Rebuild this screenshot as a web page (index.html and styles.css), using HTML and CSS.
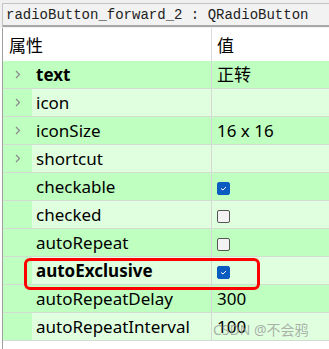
FILE: index.html
```html
<!DOCTYPE html>
<html lang="zh">
<head>
  <meta charset="UTF-8" />
  <title>Property Editor</title>
  <link rel="stylesheet" href="styles.css">
</head>
<body>
  <div class="title">
    <div class="title-box">radioButton_forward_2 : QRadioButton</div>
  </div>

  <div class="table">
    <div class="head">
      <div class="name-head">属性</div>
      <div class="value-head">值</div>
    </div>

    <div class="row dark">
      <div class="branch"><svg class="arrow" width="6" height="9" viewBox="0 0 6 9"><path d="M1 1 L4.5 4.5 L1 8" fill="none" stroke="#8a8a8a" stroke-width="1.2"/></svg></div>
      <div class="label bold">text</div>
      <div class="value">正转</div>
    </div>
    <div class="row light">
      <div class="branch"><svg class="arrow" width="6" height="9" viewBox="0 0 6 9"><path d="M1 1 L4.5 4.5 L1 8" fill="none" stroke="#8a8a8a" stroke-width="1.2"/></svg></div>
      <div class="label">icon</div>
      <div class="value"></div>
    </div>
    <div class="row dark">
      <div class="branch"><svg class="arrow" width="6" height="9" viewBox="0 0 6 9"><path d="M1 1 L4.5 4.5 L1 8" fill="none" stroke="#8a8a8a" stroke-width="1.2"/></svg></div>
      <div class="label">iconSize</div>
      <div class="value">16 x 16</div>
    </div>
    <div class="row light">
      <div class="branch"><svg class="arrow" width="6" height="9" viewBox="0 0 6 9"><path d="M1 1 L4.5 4.5 L1 8" fill="none" stroke="#8a8a8a" stroke-width="1.2"/></svg></div>
      <div class="label">shortcut</div>
      <div class="value"></div>
    </div>
    <div class="row dark">
      <div class="branch"></div>
      <div class="label">checkable</div>
      <div class="value"><span class="check on"><svg width="7" height="5" viewBox="0 0 7 5"><path d="M1 2.5 L3 4 L6 1" fill="none" stroke="#fff" stroke-width="1"/></svg></span></div>
    </div>
    <div class="row light">
      <div class="branch"></div>
      <div class="label">checked</div>
      <div class="value"><span class="check"></span></div>
    </div>
    <div class="row dark">
      <div class="branch"></div>
      <div class="label">autoRepeat</div>
      <div class="value"><span class="check"></span></div>
    </div>
    <div class="row light marked">
      <div class="branch"></div>
      <div class="label bold">autoExclusive</div>
      <div class="value"><span class="check on"><svg width="7" height="5" viewBox="0 0 7 5"><path d="M1 2.5 L3 4 L6 1" fill="none" stroke="#fff" stroke-width="1"/></svg></span></div>
      <div class="mark"></div>
    </div>
    <div class="row dark">
      <div class="branch"></div>
      <div class="label">autoRepeatDelay</div>
      <div class="value">300</div>
    </div>
    <div class="row light">
      <div class="branch"></div>
      <div class="label">autoRepeatInterval</div>
      <div class="value">100</div>
      <div class="watermark">CSDN @不会鸦</div>
    </div>
  </div>
</body>
</html>
```

FILE: styles.css
```css
body {
  margin: 0;
  background: #fff;
  font-family: "Noto Sans", "Noto Sans CJK SC", sans-serif;
  font-size: 17px;
  color: #000;
  width: 329px;
  height: 349px;
  overflow: hidden;
}
.title {
  height: 28px;
  background: #f0f0f0;
  padding: 3px 0 0 2px;
  box-sizing: border-box;
}
.title-box {
  height: 24px;
  box-sizing: border-box;
  border-top: 1px solid #c4c4c4;
  border-left: 1px solid #c4c4c4;
  border-bottom: 2px solid #a8a8a8;
  background: #f2f2f2;
  padding-left: 3px;
  font-family: "Liberation Mono", monospace;
  font-size: 14px;
  line-height: 22px;
  color: #222;
}
.table {
  margin-left: 2px;
  border-left: 1px solid #a0a0a0;
  height: 321px;
}
.head {
  display: flex;
  height: 33px;
}
.name-head {
  width: 209px;
  border-right: 1px solid #dcdcdc;
  padding-left: 6px;
  line-height: 36px;
  box-sizing: border-box;
}
.value-head {
  flex: 1;
  padding-left: 5px;
  line-height: 36px;
}
.row {
  position: relative;
  display: flex;
  height: 28px;
  box-sizing: border-box;
  border-bottom: 1px solid #d3dcd3;
  background: #bfffbf;
}
.row.marked {
  z-index: 1;
}
.row.light .label,
.row.light .value {
  background: #dfffdf;
}
.branch {
  width: 29px;
  display: flex;
  align-items: center;
  padding-left: 12px;
  box-sizing: border-box;
}
.label {
  width: 180px;
  padding-left: 4px;
  box-sizing: border-box;
  border-right: 1px solid #d6d6d6;
  line-height: 27px;
}
.bold {
  font-weight: bold;
}
.value {
  flex: 1;
  padding-left: 5px;
  line-height: 27px;
  display: flex;
  align-items: center;
}
.check {
  width: 13px;
  height: 13px;
  box-sizing: border-box;
  border: 1px solid #555;
  border-radius: 2px;
  background: #f3f3f3;
  margin-top: 3px;
  display: flex;
  align-items: center;
  justify-content: center;
}
.check.on {
  border-color: #0b5cc0;
  background: #0b5cc0;
}
.mark {
  position: absolute;
  left: 21px;
  top: 1px;
  width: 236px;
  height: 32px;
  box-sizing: border-box;
  border: 3px solid #f00;
  border-radius: 6px;
}
.watermark {
  position: absolute;
  left: 210px;
  top: 6px;
  font-size: 14px;
  color: rgba(150, 150, 150, 0.75);
  white-space: nowrap;
}
```
